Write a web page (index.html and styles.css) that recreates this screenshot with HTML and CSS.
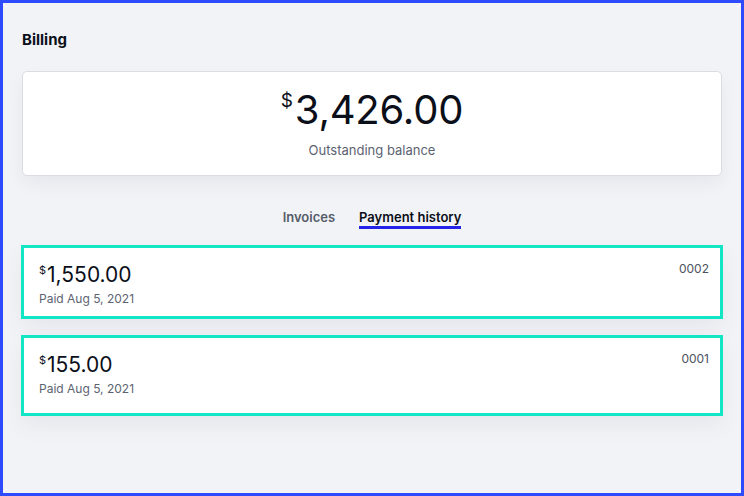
FILE: index.html
```html
<!DOCTYPE html>
<html lang="en">
<head>
<meta charset="utf-8">
<title>Billing</title>
<link rel="stylesheet" href="styles.css">
</head>
<body>
<div class="frame">
  <h1 class="title">Billing</h1>
  <section class="balance-card">
    <div class="balance-amount"><span class="currency">$</span>3,426.00</div>
    <div class="balance-label">Outstanding balance</div>
  </section>
  <nav class="tabs">
    <span class="tab">Invoices</span>
    <span class="tab tab-active">Payment history</span>
  </nav>
  <ul class="payments">
    <li class="payment">
      <div class="payment-main">
        <div class="payment-amount"><span class="currency-sm">$</span>1,550.00</div>
        <div class="payment-date">Paid Aug 5, 2021</div>
      </div>
      <div class="payment-id">0002</div>
    </li>
    <li class="payment payment-last">
      <div class="payment-main">
        <div class="payment-amount"><span class="currency-sm">$</span>155.00</div>
        <div class="payment-date">Paid Aug 5, 2021</div>
      </div>
      <div class="payment-id">0001</div>
    </li>
  </ul>
</div>
</body>
</html>
```
FILE: styles.css
```css
* { box-sizing: border-box; }
html, body { margin: 0; padding: 0; }
body {
  font-family: Inter, "Noto Sans", "Liberation Sans", sans-serif;
  color: #111827;
}
.frame {
  height: 496px;
  border: 3px solid #2f4bff;
  background: #f2f3f7;
  padding: 27px 19px 0 19px;
  overflow: hidden;
}
.title {
  margin: 0 0 21px 0;
  font-size: 15px;
  line-height: 20px;
  font-weight: 700;
  color: #0b0f19;
}
.balance-card {
  background: #fff;
  border: 1px solid #dcdde2;
  border-radius: 5px;
  box-shadow: 0 8px 18px rgba(20, 24, 40, 0.05);
  padding: 14px 0 16px;
  text-align: center;
}
.balance-amount {
  font-size: 40px;
  line-height: 48px;
  font-weight: 400;
  color: #0b0f19;
  letter-spacing: -0.2px;
}
.currency {
  font-size: 19px;
  vertical-align: top;
  line-height: 30px;
  margin-right: 2px;
}
.balance-label {
  margin-top: 7px;
  font-size: 13px;
  line-height: 18px;
  color: #5c6370;
}
.tabs {
  display: flex;
  justify-content: center;
  gap: 24px;
  margin-top: 32px;
}
.tab {
  font-size: 13px;
  line-height: 18px;
  font-weight: 600;
  color: #555c69;
  border-bottom: 3px solid transparent;
}
.tab-active {
  color: #0b0f19;
  border-bottom-color: #2424e8;
}
.payments {
  list-style: none;
  margin: 16px -1px 0;
  padding: 0;
  display: flex;
  flex-direction: column;
  gap: 16px;
}
.payment {
  display: flex;
  justify-content: space-between;
  align-items: flex-start;
  background: #fff;
  border: 3px solid #12e6c4;
  box-shadow: 0 10px 22px rgba(20, 24, 40, 0.05);
  padding: 14px 11px 9px 15px;
}
.payment-last { padding-bottom: 16px; }
.payment-amount {
  font-size: 21px;
  line-height: 26px;
  color: #0b0f19;
}
.currency-sm {
  font-size: 11px;
  vertical-align: top;
  line-height: 16px;
  margin-right: 1px;
}
.payment-date {
  margin-top: 3px;
  font-size: 12px;
  line-height: 16px;
  color: #5c6370;
}
.payment-id {
  font-size: 12px;
  line-height: 16px;
  color: #4b5260;
  margin-top: -1px;
}
```
